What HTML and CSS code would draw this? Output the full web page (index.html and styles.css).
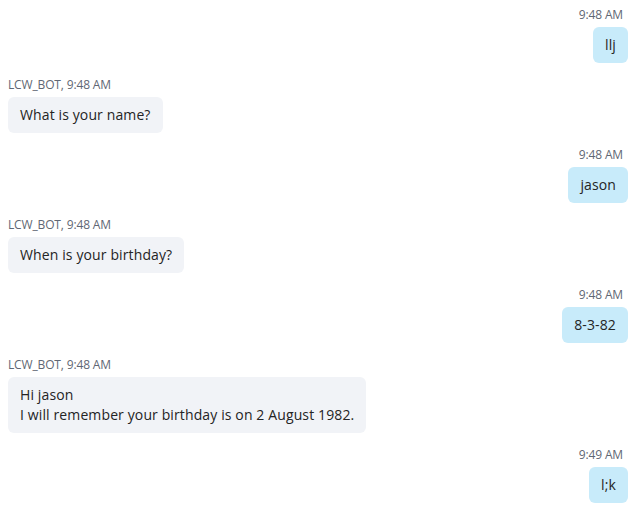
FILE: index.html
```html
<!DOCTYPE html>
<html>
<head>
<meta charset="utf-8">
<link rel="stylesheet" href="styles.css">
</head>
<body>
<div class="chat">
  <div class="group user">
    <div class="meta">9:48 AM</div>
    <div class="bubble">llj</div>
  </div>
  <div class="group bot">
    <div class="meta">LCW_BOT, 9:48 AM</div>
    <div class="bubble">What is your name?</div>
  </div>
  <div class="group user">
    <div class="meta">9:48 AM</div>
    <div class="bubble">jason</div>
  </div>
  <div class="group bot">
    <div class="meta">LCW_BOT, 9:48 AM</div>
    <div class="bubble">When is your birthday?</div>
  </div>
  <div class="group user">
    <div class="meta">9:48 AM</div>
    <div class="bubble">8-3-82</div>
  </div>
  <div class="group bot">
    <div class="meta">LCW_BOT, 9:48 AM</div>
    <div class="bubble">Hi jason<br>I will remember your birthday is on 2 August 1982.</div>
  </div>
  <div class="group user">
    <div class="meta">9:49 AM</div>
    <div class="bubble">l;k</div>
  </div>
</div>
</body>
</html>
```
FILE: styles.css
```css
html, body {
  margin: 0;
  padding: 0;
  background: #ffffff;
}
body {
  font-family: "Segoe UI", "Open Sans", "Liberation Sans", sans-serif;
  color: #242424;
}
.chat {
  display: flex;
  flex-direction: column;
  gap: 14px;
  padding: 7px 7px 0 8px;
}
.group {
  display: flex;
  flex-direction: column;
  gap: 4px;
}
.group.user {
  align-items: flex-end;
}
.group.user .meta {
  padding-right: 5px;
}
.group.bot {
  align-items: flex-start;
}
.meta {
  font-size: 12px;
  line-height: 16px;
  color: #5f6774;
  letter-spacing: -0.15px;
}
.bubble {
  font-size: 14px;
  line-height: 20px;
  padding: 8px 12px;
  border-radius: 6px;
  letter-spacing: 0.12px;
}
.user .bubble {
  background: #c8ebfa;
}
.bot .bubble {
  background: #f1f3f7;
}
```
